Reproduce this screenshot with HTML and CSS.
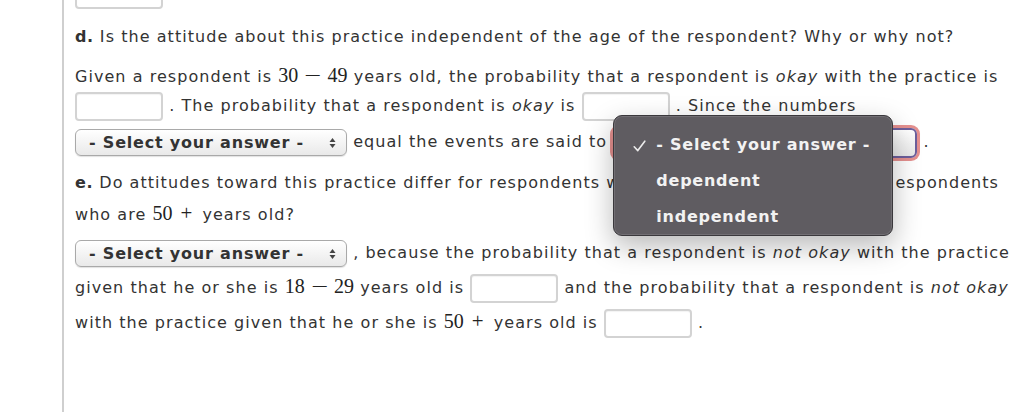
FILE: index.html
```html
<!DOCTYPE html>
<html>
<head>
<meta charset="utf-8">
<link rel="stylesheet" href="styles.css">
</head>
<body>
<div class="page">
  <div class="line top-row"><span class="box"></span></div>

  <div class="line l-d"><b>d.</b> Is the attitude about this practice independent of the age of the respondent? Why or why not?</div>
  <div class="line l-given">Given a respondent is <span class="m">30<span class="op">−</span>49</span> years old, the probability that a respondent is <i>okay</i> with the practice is</div>
  <div class="line l-in"><span class="box"></span> . The probability that a respondent is <i>okay</i> is <span class="box"></span> . Since the numbers</div>
  <div class="line l-sel"><span class="sel"><span class="sel-text">- Select your answer -</span><svg class="arr" width="7" height="12" viewBox="0 0 7 12"><path d="M3.5 1 L6.5 5 L0.5 5 Z M3.5 11 L6.5 7 L0.5 7 Z" fill="#444"/></svg></span> equal the events are said to <span class="sel-wrap"><span class="sel sel-focus"></span><span class="menu"><span class="opt"><svg class="check" width="13" height="12" viewBox="0 0 13 12"><path d="M1.2 6.8 L4.8 10.6 L11.8 1.2" fill="none" stroke="#ececec" stroke-width="1.6" stroke-linecap="round" stroke-linejoin="round"/></svg>- Select your answer -</span><span class="opt">dependent</span><span class="opt">independent</span></span></span> .</div>

  <div class="line l-e"><b>e.</b> Do attitudes toward this practice differ for respondents w<span class="gap"></span>espondents</div>
  <div class="line l-who">who are <span class="m">50<span class="op plus">+</span></span> years old?</div>

  <div class="line l-sel2"><span class="sel"><span class="sel-text">- Select your answer -</span><svg class="arr" width="7" height="12" viewBox="0 0 7 12"><path d="M3.5 1 L6.5 5 L0.5 5 Z M3.5 11 L6.5 7 L0.5 7 Z" fill="#444"/></svg></span> , because the probability that a respondent is <i>not okay</i> with the practice</div>
  <div class="line l-in2">given that he or she is <span class="m">18<span class="op">−</span>29</span> years old is <span class="box"></span> and the probability that a respondent is <i>not okay</i></div>
  <div class="line l-in3">with the practice given that he or she is <span class="m">50<span class="op plus">+</span></span> years old is <span class="box"></span> .</div>
</div>
</body>
</html>
```

FILE: styles.css
```css
html, body {
  margin: 0;
  padding: 0;
  background: #fff;
}
body {
  width: 1036px;
  height: 412px;
  overflow: hidden;
  font-family: "DejaVu Sans", Verdana, sans-serif;
  font-size: 16px;
  letter-spacing: 1.05px;
  color: #333;
}
.page {
  margin-left: 62px;
  border-left: 2px solid #cfcfcf;
  padding-left: 11px;
  height: 440px;
  box-sizing: border-box;
  margin-top: -20px;
  white-space: nowrap;
}
.line {
  position: relative;
}
.top-row { height: 30px; line-height: 30px; }
.top-row .box { vertical-align: top; }
.l-d { height: 30px; line-height: 30px; margin-top: 12px; }
.l-given { height: 30px; line-height: 30px; margin-top: 8px; }
.l-in { height: 32px; line-height: 32px; }
.l-sel { height: 40px; line-height: 40px; }
.l-e { height: 30px; line-height: 30px; margin-top: 6px; }
.l-who { height: 30px; line-height: 30px; }
.l-sel2 { height: 33px; line-height: 33px; margin-top: 8px; }
.l-in2 { height: 34px; line-height: 34px; }
.l-in3 { height: 36px; line-height: 36px; }

b { font-weight: bold; letter-spacing: 0.6px; }

.m {
  font-family: "Liberation Serif", "DejaVu Serif", serif;
  font-size: 20px;
  letter-spacing: 0;
  color: #222;
}
.op {
  display: inline-block;
  margin: 0 9px;
  transform: scaleX(1.5);
}
.op.plus {
  transform: none;
  font-size: 21px;
  margin: 0 4px 0 8px;
  line-height: 1;
}

.gap {
  display: inline-block;
  width: 275px;
  height: 1px;
}

.box {
  display: inline-block;
  vertical-align: middle;
  width: 84px;
  height: 25px;
  border: 2px solid #d3d3d3;
  border-radius: 4px;
  background: #fff;
  box-shadow: inset 0 1px 1px rgba(0,0,0,0.05);
}

.sel {
  display: inline-flex;
  align-items: center;
  justify-content: space-between;
  vertical-align: middle;
  box-sizing: border-box;
  width: 272px;
  height: 27px;
  padding: 0 10px 0 13px;
  border: 1px solid #a9a9a9;
  border-radius: 6px;
  background: linear-gradient(#ffffff, #f4f4f4 50%, #e9e9e9);
  box-shadow: 0 1px 1px rgba(0,0,0,0.12);
  font-weight: bold;
  font-size: 16px;
  letter-spacing: 0.8px;
  line-height: 1;
  color: #333;
}
.arr { display: block; }

.sel-wrap {
  position: relative;
  display: inline-block;
  vertical-align: middle;
  line-height: 1;
}
.sel-focus {
  width: 304px;
  height: 30px;
  border: 2px solid #6d5f9c;
  box-shadow: 0 0 0 3px #e5908f;
}
.menu {
  position: absolute;
  left: 0;
  top: -13px;
  width: 280px;
  height: 121px;
  box-sizing: border-box;
  padding-top: 11px;
  background: #5f5c61;
  border: 1px solid #3a383c;
  border-radius: 9px;
  box-shadow: inset 0 0 0 1px rgba(255,255,255,0.12), 0 10px 28px rgba(0,0,0,0.28);
  display: flex;
  flex-direction: column;
  z-index: 5;
}
.opt {
  display: block;
  height: 36px;
  line-height: 36px;
  padding-left: 42px;
  position: relative;
  color: #f2f2f2;
  font-weight: bold;
  font-size: 16px;
  letter-spacing: 0.75px;
  font-family: "DejaVu Sans", Verdana, sans-serif;
}
.check {
  position: absolute;
  left: 19px;
  top: 13px;
}
```
